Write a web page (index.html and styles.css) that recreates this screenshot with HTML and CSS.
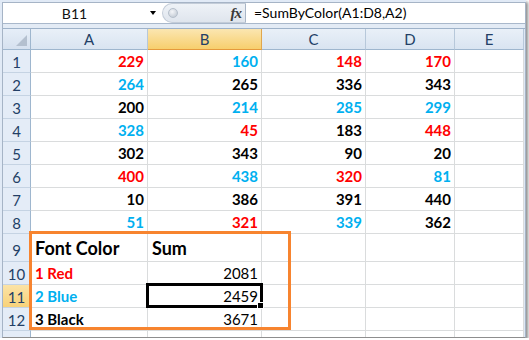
FILE: index.html
```html
<!DOCTYPE html>
<html>
<head>
<meta charset="utf-8">
<link rel="stylesheet" href="styles.css">
</head>
<body>
<div class="window">
  <div class="inner">
    <div class="fbar">
      <div class="namebox"><span class="name">B11</span><span class="dd"></span></div>
      <div class="fxzone"><span class="knob"></span><span class="fx">fx</span></div>
      <div class="formula">=SumByColor(A1:D8,A2)</div>
    </div>
    <div class="strip"></div>
    <div class="grid">
      <div class="corner"><span class="tri"></span></div>
      <div class="ch">A</div><div class="ch hl">B</div><div class="ch">C</div><div class="ch">D</div><div class="ch">E</div>

      <div class="rh">1</div><div class="c red">229</div><div class="c blue">160</div><div class="c red">148</div><div class="c red">170</div><div class="c"></div>
      <div class="rh">2</div><div class="c blue">264</div><div class="c">265</div><div class="c">336</div><div class="c">343</div><div class="c"></div>
      <div class="rh">3</div><div class="c">200</div><div class="c blue">214</div><div class="c blue">285</div><div class="c blue">299</div><div class="c"></div>
      <div class="rh">4</div><div class="c blue">328</div><div class="c red">45</div><div class="c">183</div><div class="c red">448</div><div class="c"></div>
      <div class="rh">5</div><div class="c">302</div><div class="c">343</div><div class="c">90</div><div class="c">20</div><div class="c"></div>
      <div class="rh">6</div><div class="c red">400</div><div class="c blue">438</div><div class="c red">320</div><div class="c blue">81</div><div class="c"></div>
      <div class="rh">7</div><div class="c">10</div><div class="c">386</div><div class="c">391</div><div class="c">440</div><div class="c"></div>
      <div class="rh">8</div><div class="c blue">51</div><div class="c red">321</div><div class="c blue">339</div><div class="c">362</div><div class="c"></div>

      <div class="rh tall">9</div><div class="c tall left big">Font Color</div><div class="c tall left big">Sum</div><div class="c tall"></div><div class="c tall"></div><div class="c tall"></div>
      <div class="rh">10</div><div class="c left red">1 Red</div><div class="c reg">2081</div><div class="c"></div><div class="c"></div><div class="c"></div>
      <div class="rh hl">11</div><div class="c left blue">2 Blue</div><div class="c reg">2459</div><div class="c"></div><div class="c"></div><div class="c"></div>
      <div class="rh">12</div><div class="c left">3 Black</div><div class="c reg">3671</div><div class="c"></div><div class="c"></div><div class="c"></div>
      <div class="rh"></div><div class="c"></div><div class="c"></div><div class="c"></div><div class="c"></div><div class="c"></div>
    </div>
  </div>
  <div class="obox"></div>
  <div class="selbox"><span class="handle"></span></div>
</div>
</body>
</html>
```

FILE: styles.css
```css
html, body {
  margin: 0;
  padding: 0;
  background: #ffffff;
}

.window {
  position: relative;
  width: 526px;
  height: 338px;
  box-sizing: border-box;
  padding: 2px 0 0 2px;
  background: #e1eaf6;
  box-shadow: 2px 2px 3px rgba(0, 0, 0, 0.45);
  overflow: visible;
}

.inner {
  height: 336px;
  box-sizing: border-box;
  border-left: 1px solid #a6b4c6;
  border-top: 1px solid #a6b4c6;
  border-right: 1px solid #a6b4c6;
  border-bottom: 1px solid #8e8e8e;
  background: #dfe8f4;
  overflow: hidden;
}

/* formula bar */
.fbar {
  display: flex;
  height: 20px;
  border-bottom: 1px solid #a9b8cb;
  background: #ffffff;
  font-family: Lato, "Liberation Sans", sans-serif;
}

.namebox {
  width: 159px;
  display: flex;
  align-items: center;
}

.name {
  width: 143px;
  text-align: center;
  font-size: 14px;
  color: #111;
}

.dd {
  width: 0;
  height: 0;
  margin-left: 4px;
  border-left: 3.5px solid transparent;
  border-right: 3.5px solid transparent;
  border-top: 4px solid #000;
}

.fxzone {
  position: relative;
  width: 84px;
  box-sizing: border-box;
  border-radius: 10px 0 0 10px;
  border: 1px solid #c3ccd8;
  border-right: 1px solid #a8b5c6;
  background: linear-gradient(#eef2f7, #dfe5ed);
  display: flex;
  align-items: center;
  justify-content: space-between;
  padding: 0 4px 0 5px;
}

.knob {
  width: 8px;
  height: 8px;
  border-radius: 50%;
  background: radial-gradient(circle at 40% 35%, #f4f6f9, #b9c2cd);
  border: 1px solid #b5bfcb;
}

.fx {
  font-family: "Liberation Serif", serif;
  font-style: italic;
  font-weight: bold;
  font-size: 15px;
  color: #3a3a3a;
  letter-spacing: -1px;
}

.formula {
  flex: 1;
  padding-left: 8px;
  font-size: 14px;
  line-height: 20px;
  color: #000;
}

.strip {
  height: 4px;
  background: #e3ebf5;
  border-bottom: 1px solid #9eb2c9;
}

/* grid */
.grid {
  display: grid;
  width: 521px;
  grid-template-columns: 28px 117px 114px 104px 89px 69px;
  grid-template-rows: 21px repeat(8, 23px) 28px repeat(4, 23px);
  font-family: Lato, "Liberation Sans", sans-serif;
}

.corner {
  position: relative;
  background: linear-gradient(#e6eef8, #d6e1ef);
  border-right: 1px solid #9eb6ce;
  border-bottom: 1px solid #9eb6ce;
}

.tri {
  position: absolute;
  right: 3px;
  bottom: 3px;
  width: 0;
  height: 0;
  border-left: 11px solid transparent;
  border-bottom: 11px solid #b4c0cf;
}

.ch {
  display: flex;
  align-items: center;
  justify-content: center;
  background: linear-gradient(#e9f0f8, #d9e4f1);
  border-right: 1px solid #b7c8da;
  border-bottom: 1px solid #9eb6ce;
  font-size: 15px;
  color: #233f66;
}

.ch.hl {
  background: linear-gradient(#fbe6b1, #f7cf6d);
  border-bottom: 1px solid #e59a3c;
  border-right: 1px solid #e0a64d;
}

.rh {
  display: flex;
  align-items: center;
  justify-content: center;
  background: #e4ecf7;
  border-right: 1px solid #9eb6ce;
  border-bottom: 1px solid #c5d3e3;
  font-size: 15px;
  color: #233f66;
  padding-top: 2px;
  box-sizing: border-box;
}

.rh.hl {
  background: linear-gradient(#fbe3a6, #f8d27a);
  border-right: 1px solid #e59a3c;
}

.rh.tall {
  align-items: flex-end;
  padding-bottom: 2px;
}

.c {
  display: flex;
  align-items: flex-end;
  justify-content: flex-end;
  box-sizing: border-box;
  padding: 0 3px 2px 0;
  background: #ffffff;
  border-right: 1px solid #dadcdd;
  border-bottom: 1px solid #dadcdd;
  font-size: 15px;
  font-weight: bold;
  line-height: 18px;
  color: #000;
  white-space: nowrap;
}

.c.left {
  justify-content: flex-start;
  padding-left: 4px;
}

.c.big {
  font-size: 18px;
  line-height: 22px;
}

.c.reg {
  font-weight: normal;
}

.red {
  color: #ff0000;
}

.blue {
  color: #00b0f0;
}

/* overlays */
.obox {
  position: absolute;
  left: 29px;
  top: 231px;
  width: 262px;
  height: 99px;
  box-sizing: border-box;
  border: 3px solid #f7842f;
}

.selbox {
  position: absolute;
  left: 146px;
  top: 283px;
  width: 117px;
  height: 25px;
  box-sizing: border-box;
  border: 3px solid #000;
}

.handle {
  position: absolute;
  right: -4px;
  bottom: -4px;
  width: 5px;
  height: 5px;
  background: #000;
  border: 1px solid #fff;
}
```
